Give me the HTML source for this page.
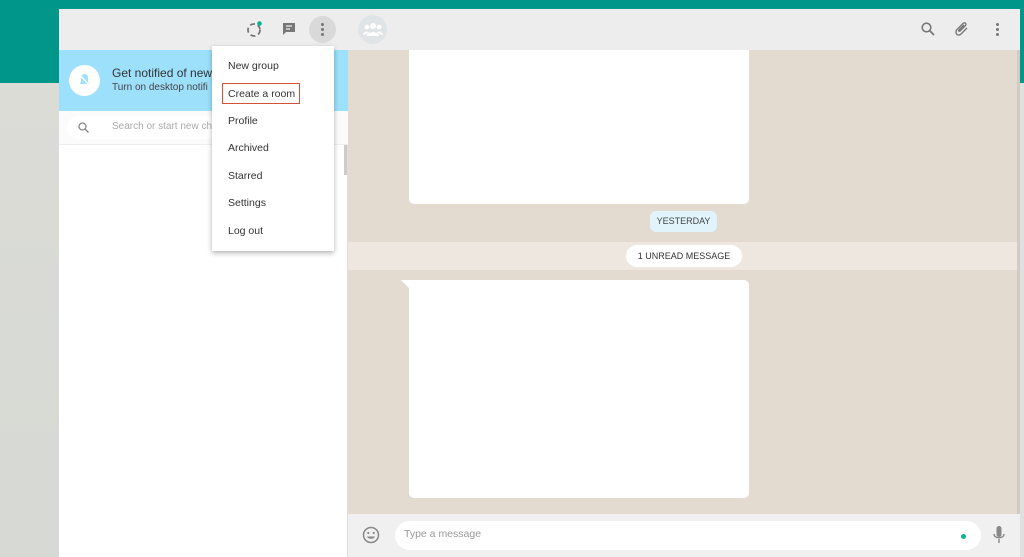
<!DOCTYPE html>
<html><head><style>
*{margin:0;padding:0;box-sizing:border-box}
body{width:1024px;height:557px;overflow:hidden;position:relative;font-family:"Liberation Sans",sans-serif;background:linear-gradient(#dcdcd6,#d6d9d4)}
.abs{position:absolute}
</style></head><body>
<div class="abs" style="left:0;top:0;width:1024px;height:83px;background:#00968a"></div>
<!-- left panel -->
<div class="abs" style="left:59px;top:9px;width:289px;height:548px;background:#fff;border-right:1px solid #ddd"></div>
<div class="abs" style="left:59px;top:9px;width:289px;height:41px;background:#ededed"></div>
<svg class="abs" style="left:245px;top:19px" width="20" height="20" viewBox="0 0 20 20"><circle cx="9" cy="11" r="6" fill="none" stroke="#777" stroke-width="1.8" stroke-dasharray="5 3"/><circle cx="14.5" cy="4.5" r="2.3" fill="#09b38f"/></svg>
<svg class="abs" style="left:281px;top:21px" width="16" height="16" viewBox="0 0 16 16"><path d="M2 2h12v9H5l-3 3z" fill="#777"/><path d="M5 5h6M5 8h4" stroke="#ededed" stroke-width="1.2"/></svg>
<div class="abs" style="left:309px;top:16px;width:27px;height:27px;border-radius:50%;background:#d9d9d9"></div>
<svg class="abs" style="left:320px;top:22px" width="5" height="15"><circle cx="2.5" cy="2.5" r="1.5" fill="#777"/><circle cx="2.5" cy="7.5" r="1.5" fill="#777"/><circle cx="2.5" cy="12.5" r="1.5" fill="#777"/></svg>
<div class="abs" style="left:59px;top:50px;width:289px;height:61px;background:#9de0fc"></div>
<div class="abs" style="left:69px;top:65px;width:31px;height:31px;border-radius:50%;background:#fff"></div>
<svg class="abs" style="left:78px;top:73px" width="13" height="14" viewBox="0 0 13 14"><path d="M6.5 1C4 1 3 3 3 5v4L1.5 11h10L10 9V5c0-2-1-4-3.5-4z" fill="#9de0fc"/><path d="M1 1l11 12" stroke="#fff" stroke-width="1.3"/></svg>
<div class="abs" style="left:112px;top:66px;font-size:12px;color:#333">Get notified of new</div>
<div class="abs" style="left:112px;top:82px;font-size:10px;color:#444">Turn on desktop notifi</div>
<div class="abs" style="left:59px;top:111px;width:289px;height:34px;background:#fbfbfb;border-bottom:1px solid #eee"></div>
<div class="abs" style="left:67px;top:116px;width:200px;height:23px;border-radius:12px;background:#fff"></div>
<svg class="abs" style="left:78px;top:122px" width="11" height="11"><circle cx="4.5" cy="4.5" r="3.5" fill="none" stroke="#888" stroke-width="1.3"/><path d="M7 7l3.5 3.5" stroke="#888" stroke-width="1.3"/></svg>
<div class="abs" style="left:112px;top:121px;font-size:10px;color:#aaa">Search or start new ch</div>
<div class="abs" style="left:344px;top:145px;width:3px;height:30px;background:#ccc"></div>
<!-- chat -->
<div class="abs" style="left:348px;top:9px;width:672px;height:548px;background:#e3dad0"></div>
<div class="abs" style="left:348px;top:9px;width:672px;height:41px;background:#ededed"></div>
<div class="abs" style="left:358px;top:15px;width:29px;height:29px;border-radius:50%;background:#dfe5e7"></div>
<svg class="abs" style="left:362px;top:22px" width="22" height="14" viewBox="0 0 22 14"><circle cx="11" cy="4" r="3" fill="#fff"/><circle cx="5" cy="5" r="2.3" fill="#fff"/><circle cx="17" cy="5" r="2.3" fill="#fff"/><path d="M5 14c0-5 12-5 12 0zM1 13c0-4 6-4 6-2M21 13c0-4-6-4-6-2" fill="#fff"/></svg>
<svg class="abs" style="left:921px;top:22px" width="14" height="14"><circle cx="5.5" cy="5.5" r="4.3" fill="none" stroke="#777" stroke-width="1.6"/><path d="M8.5 8.5l4.5 4.5" stroke="#777" stroke-width="1.8"/></svg>
<svg class="abs" style="left:954px;top:21px" width="16" height="16" viewBox="0 0 16 16"><path d="M13 7l-6 6c-2 2-5 1-5-2 0-1 .5-2 1-2.5l6-6c1.5-1.5 4 0 2.5 2l-5.5 5.5c-.7.7-1.8 0-1-1L10 4" fill="none" stroke="#777" stroke-width="1.4"/></svg>
<svg class="abs" style="left:995px;top:22px" width="5" height="15"><circle cx="2.5" cy="2.5" r="1.5" fill="#777"/><circle cx="2.5" cy="7.5" r="1.5" fill="#777"/><circle cx="2.5" cy="12.5" r="1.5" fill="#777"/></svg>
<div class="abs" style="left:409px;top:50px;width:340px;height:154px;background:#fff;border-radius:0 0 5px 5px"></div>
<div class="abs" style="left:650px;top:211px;width:67px;height:21px;border-radius:6px;background:#e1f3fb;font-size:9px;color:#444;text-align:center;line-height:21px">YESTERDAY</div>
<div class="abs" style="left:348px;top:242px;width:672px;height:28px;background:rgba(255,255,255,.35)"></div>
<div class="abs" style="left:626px;top:245px;width:116px;height:22px;border-radius:11px;background:#fff;font-size:9px;color:#333;text-align:center;line-height:22px">1 UNREAD MESSAGE</div>
<div class="abs" style="left:409px;top:280px;width:340px;height:218px;background:#fff;border-radius:0 5px 5px 5px"></div>
<div class="abs" style="left:401px;top:280px;width:0;height:0;border-top:8px solid #fff;border-left:8px solid transparent"></div>
<div class="abs" style="left:1017px;top:50px;width:3px;height:464px;background:#d2cbc4"></div>
<div class="abs" style="left:1020px;top:83px;width:4px;height:474px;background:#e0e0e0"></div>
<div class="abs" style="left:348px;top:514px;width:672px;height:43px;background:#f0f0f0"></div>
<svg class="abs" style="left:362px;top:526px" width="18" height="18"><circle cx="9" cy="9" r="7.5" fill="none" stroke="#888" stroke-width="1.5"/><circle cx="6.3" cy="7" r="1.1" fill="#888"/><circle cx="11.7" cy="7" r="1.1" fill="#888"/><path d="M5 10.5h8c-1 3-7 3-8 0z" fill="#888"/></svg>
<div class="abs" style="left:395px;top:521px;width:586px;height:29px;border-radius:15px;background:#fff"></div>
<div class="abs" style="left:404px;top:528px;font-size:10.5px;color:#999">Type a message</div>
<div class="abs" style="left:961px;top:534px;width:5px;height:5px;border-radius:50%;background:#09b38f"></div>
<svg class="abs" style="left:993px;top:526px" width="12" height="18"><rect x="3.5" y="0" width="5" height="11" rx="2.5" fill="#888"/><path d="M1 8c0 5 10 5 10 0M6 13v4" fill="none" stroke="#888" stroke-width="1.4"/></svg>
<!-- menu -->
<div class="abs" style="left:212px;top:46px;width:122px;height:205px;background:#fff;box-shadow:0 2px 5px rgba(0,0,0,.3);font-size:10.5px;color:#333">
<div class="abs" style="left:16px;top:14px">New group</div>
<div class="abs" style="left:10px;top:37px;width:78px;height:21px;border:1px solid #d0533a"></div>
<div class="abs" style="left:16px;top:42px">Create a room</div>
<div class="abs" style="left:16px;top:69px">Profile</div>
<div class="abs" style="left:16px;top:96px">Archived</div>
<div class="abs" style="left:16px;top:124px">Starred</div>
<div class="abs" style="left:16px;top:151px">Settings</div>
<div class="abs" style="left:16px;top:179px">Log out</div>
</div>
</body></html>
